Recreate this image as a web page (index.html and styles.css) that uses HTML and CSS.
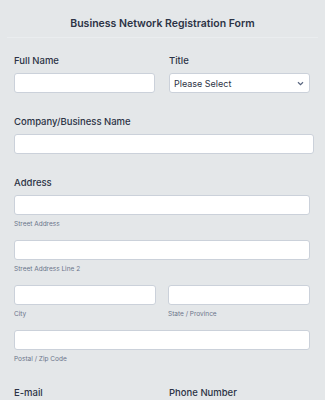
FILE: index.html
```html
<!DOCTYPE html>
<html lang="en">
<head>
  <meta charset="UTF-8" />
  <meta name="viewport" content="width=device-width, initial-scale=1.0" />
  <title>Business Network Registration Form</title>
<link rel="stylesheet" href="styles.css">
</head>
<body>

<!-- header -->
<div class="form-header">Business Network Registration Form</div>

<form class="form">
  <!-- name / title -->
  <div class="row">
    <div class="field">
      <label class="label">Full Name</label>
      <input class="input" type="text">
    </div>
    <div class="field">
      <label class="label">Title</label>
      <div class="select-wrap">
        <select class="input select">
          <option>Please Select</option>
        </select>
        <svg class="chevron" width="7" height="5" viewBox="0 0 7 5"><path d="M1 1.2 L3.5 3.6 L6 1.2" fill="none" stroke="#57647e" stroke-width="1.2"/></svg>
      </div>
    </div>
  </div>

  <div class="field">
    <label class="label">Company/Business Name</label>
    <input class="input input-wide" type="text">
  </div>

  <!-- address -->
  <div class="field">
    <label class="label">Address</label>
    <input class="input" type="text">
    <span class="sublabel">Street Address</span>
    <input class="input" type="text">
    <span class="sublabel">Street Address Line 2</span>
    <div class="row row-tight">
      <div>
        <input class="input" type="text">
        <span class="sublabel">City</span>
      </div>
      <div>
        <input class="input" type="text">
        <span class="sublabel">State / Province</span>
      </div>
    </div>
    <input class="input" type="text">
    <span class="sublabel">Postal / Zip Code</span>
  </div>

  <div class="row">
    <div class="field">
      <label class="label">E-mail</label>
      <input class="input" type="text">
    </div>
    <div class="field">
      <label class="label">Phone Number</label>
      <input class="input" type="text">
    </div>
  </div>
</form>

</body>
</html>
```

FILE: styles.css
```css
  /* ─── page base ─────────────────────────────────────────── */
  body {
    margin: 0;
    font-family: Inter, "Noto Sans", sans-serif;
    color: #2c3345;
    background: #e4e7e9;
  }

  /* ─── header ────────────────────────────────────────────── */
  .form-header {
    margin: 0 7px;
    padding: 17px 0 7px;
    font-size: 10.5px;
    line-height: 13px;
    font-weight: 600;
    text-align: center;
    border-bottom: 1px solid #eaedef;
  }

  /* ─── form ──────────────────────────────────────────────── */
  .form {
    padding: 17px 15px 0 14px;
  }

  .row {
    display: grid;
    grid-template-columns: 1fr 1fr;
    gap: 14px;
  }

  .row-tight {
    gap: 12px;
  }

  .field {
    margin-bottom: 23px;
  }

  .label {
    display: block;
    font-size: 9.5px;
    line-height: 12px;
    font-weight: 500;
    margin-bottom: 6px;
  }

  .input {
    display: block;
    width: 100%;
    height: 20px;
    box-sizing: border-box;
    margin: 0;
    border: 1px solid #cbd1da;
    border-radius: 3px;
    background: #fff;
    font-family: inherit;
    font-size: 9px;
    color: #2c3345;
  }

  .input-wide {
    width: calc(100% + 4px);
  }

  .sublabel {
    display: block;
    margin: 5px 0 11px;
    font-size: 6.5px;
    line-height: 9px;
    color: #6b7489;
  }

  /* ─── select ────────────────────────────────────────────── */
  .select-wrap {
    position: relative;
  }

  .select {
    appearance: none;
    padding: 0 0 0 4px;
    outline: none;
  }

  .chevron {
    position: absolute;
    right: 6px;
    top: 8px;
  }
```
